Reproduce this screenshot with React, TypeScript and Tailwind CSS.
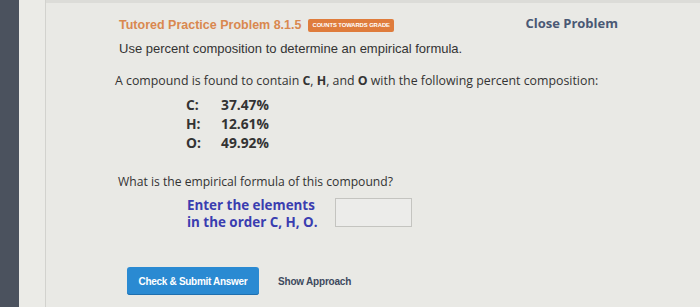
export default function App() {
  const rows = [
    { el: 'C:', pct: '37.47%' },
    { el: 'H:', pct: '12.61%' },
    { el: 'O:', pct: '49.92%' },
  ];

  return (
    <div className="flex h-[307px] w-[700px] overflow-hidden bg-[#e9e9e5]">
      {/* left window edge */}
      <div className="w-[19px] shrink-0 bg-[#4b525e]" />
      <div className="w-[27px] shrink-0 border-r border-[#d2d2ce] bg-[#ebebe7]" />

      <div className="flex flex-1 flex-col border-t-[3px] border-[#dcdcd8]">
        {/* header */}
        <div className="flex items-start justify-between pr-[82px] pl-[73px] pt-[13px]">
          <div className="flex flex-col">
            <div className="flex items-center gap-[7px]">
              <span className="font-['Liberation_Sans',Arial,sans-serif] text-[12.5px] font-bold text-[#d9884f]">
                Tutored Practice Problem 8.1.5
              </span>
              <span className="rounded-[2px] bg-[#df7c3c] px-[4px] py-[3px] font-['Liberation_Sans',Arial,sans-serif] text-[5.9px] font-bold leading-[7px] tracking-[-0.1px] text-white">
                COUNTS TOWARDS GRADE
              </span>
            </div>
            <div className="mt-[4px] font-['Liberation_Sans',Arial,sans-serif] text-[13px] text-[#333]">
              Use percent composition to determine an empirical formula.
            </div>
          </div>
          <span className="-mt-[2px] font-['Open_Sans',sans-serif] text-[13px] font-bold text-[#4a5874]">
            Close Problem
          </span>
        </div>

        {/* question body */}
        <div className="flex flex-col pl-[69px] font-['Open_Sans',sans-serif] text-[#333]">
          <p className="mt-[14px] text-[12.35px]">
            A compound is found to contain <b>C</b>, <b>H</b>, and <b>O</b> with the following percent composition:
          </p>
          <div className="mt-[4px] ml-[71px] grid grid-cols-[35px_auto] text-[13.8px] leading-[19px] font-bold">
            {rows.map((r) => (
              <div key={r.el} className="contents">
                <span>{r.el}</span>
                <span>{r.pct}</span>
              </div>
            ))}
          </div>

          <p className="mt-[21px] ml-[3px] text-[12.15px]">What is the empirical formula of this compound?</p>

          <div className="mt-[6px] ml-[72px] flex items-center gap-[17px]">
            <div className="text-[13.4px] leading-[17px] font-bold text-[#3a3db0]">
              Enter the elements
              <br />
              in the order C, H, O.
            </div>
            <div className="-mt-[4px] h-[29px] w-[77px] border border-[#c4c4c0] bg-[#ececea]" />
          </div>

          <div className="mt-[36px] ml-[12px] flex items-center gap-[19px] font-['Liberation_Sans',Arial,sans-serif]">
            <button className="h-[28px] w-[132px] rounded-[3px] bg-[#2a8ad2] text-[10px] font-bold tracking-[-0.3px] text-white shadow-[inset_0_-1px_0_#1f6fae]">
              Check &amp; Submit Answer
            </button>
            <span className="text-[10px] font-bold tracking-[-0.2px] text-[#3d4a5e]">Show Approach</span>
          </div>
        </div>
      </div>
    </div>
  );
}
